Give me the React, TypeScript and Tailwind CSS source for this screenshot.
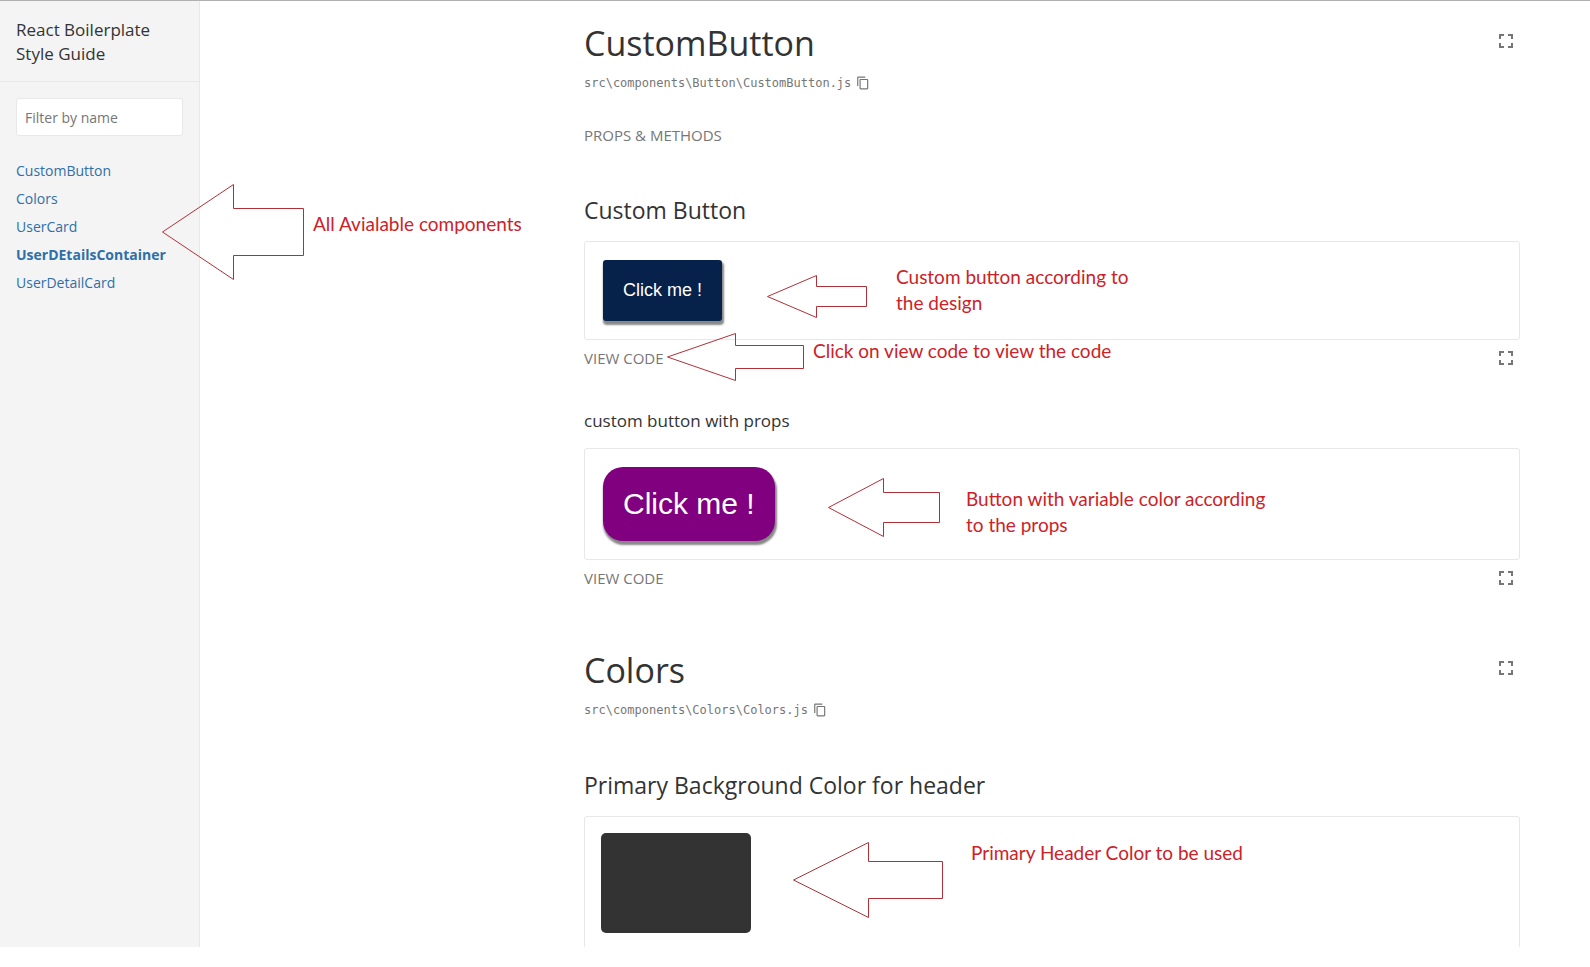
import { useState } from 'react';
import type { ReactNode } from 'react';
import { MdContentCopy, MdFullscreen } from 'react-icons/md';

const components = ['CustomButton', 'Colors', 'UserCard', 'UserDEtailsContainer', 'UserDetailCard'];
const activeComponent = 'UserDEtailsContainer';

function Sidebar() {
  const [filter, setFilter] = useState('');
  const visible = components.filter((name) => name.toLowerCase().includes(filter.toLowerCase()));

  return (
    <aside className="w-[200px] shrink-0 border-r border-[#e8e8e8] bg-[#f4f4f4]">
      <div className="border-b border-[#e8e8e8] pt-[17px] pr-4 pb-[15px] pl-4">
        <h1 className="text-[17px] leading-6 text-[#333]">React Boilerplate Style Guide</h1>
      </div>
      <div className="p-4">
        <input
          type="text"
          aria-label="Filter by name"
          placeholder="Filter by name"
          value={filter}
          onChange={(e) => setFilter(e.target.value)}
          className="h-[38px] w-full rounded-[3px] border border-[#e8e8e8] bg-white px-2 text-[14px] text-[#333] placeholder:text-[#767676]"
        />
      </div>
      <nav>
        <ul className="px-4 pt-[5px]">
          {visible.map((name) => (
            <li key={name} className="h-7 text-[14px] leading-7">
              <a href={'#' + name} className={name === activeComponent ? 'font-bold text-[#2f6fa7]' : 'text-[#2f6fa7]'}>
                {name}
              </a>
            </li>
          ))}
        </ul>
      </nav>
    </aside>
  );
}

function IsolateButton() {
  return (
    <button type="button" aria-label="Open isolated" className="text-[#767676]">
      <MdFullscreen size={24} />
    </button>
  );
}

function ComponentHeader({ name, path }: { name: string; path: string }) {
  return (
    <header>
      <div className="flex items-start justify-between pr-[2px]">
        <h2 className="text-[34px] leading-[44px] text-[#333]">{name}</h2>
        <div className="flex h-10 items-center">
          <IsolateButton />
        </div>
      </div>
      <div className="mt-2 flex h-5 items-center gap-[5px] font-['DejaVu_Sans_Mono',monospace] text-[12px] text-[#767676]">
        <span>{path}</span>
        <button type="button" aria-label="Copy to clipboard">
          <MdContentCopy size={14} />
        </button>
      </div>
    </header>
  );
}

function Preview({ children }: { children: ReactNode }) {
  return <div className="relative rounded-[3px] border border-[#e8e8e8] p-4">{children}</div>;
}

function PreviewToolbar({ children }: { children?: ReactNode }) {
  return (
    <div className="relative flex h-9 items-center justify-between pr-[2px]">
      <button type="button" className="text-[15px] text-[#767676]">VIEW CODE</button>
      {children}
      <IsolateButton />
    </div>
  );
}

interface ArrowProps {
  width: number;
  height: number;
  head: number;
  inset: number;
  className: string;
}

// Left pointing outline arrow: head is the head's length, inset the gap above and below the shaft
function Arrow({ width: w, height: h, head, inset, className }: ArrowProps) {
  const points = [
    [0, h / 2], [head, 0], [head, inset], [w, inset], [w, h - inset], [head, h - inset], [head, h],
  ].map((p) => p.join(',')).join(' ');

  return (
    <svg width={w + 1} height={h + 1} viewBox={`-0.5 -0.5 ${w + 1} ${h + 1}`} className={className} aria-hidden="true">
      <polygon points={points} fill="none" stroke="#b03038" strokeWidth="1" />
    </svg>
  );
}

function Note({ children, className }: { children: ReactNode; className: string }) {
  return (
    <p className={"absolute whitespace-nowrap font-['Lato',sans-serif] text-[19px] leading-[26px] text-[#cc2228] " + className}>
      {children}
    </p>
  );
}

export default function App() {
  return (
    <div className="h-screen bg-white pb-5 font-['Open_Sans',sans-serif]">
      <div className="relative flex h-full overflow-hidden border-t border-[#b0b0b0]">
        <Sidebar />
        <main className="min-w-0 flex-1 pl-96 pr-[70px] pt-5">
          <section>
            <ComponentHeader name="CustomButton" path="src\components\Button\CustomButton.js" />
            <button type="button" className="mt-8 block text-[15px] leading-5 text-[#767676]">PROPS &amp; METHODS</button>
            <h3 className="mt-[49px] text-[23px] leading-8 text-[#333]">Custom Button</h3>
            <div className="mt-[15px]">
              <Preview>
                <button
                  type="button"
                  className="m-[2px] block rounded-[3px] bg-[#06214a] p-5 font-['Liberation_Sans',sans-serif] text-[18px] leading-[21px] text-white shadow-[1px_3px_2px_1px_#888]"
                >
                  Click me !
                </button>
                <Arrow width={99} height={42} head={49} inset={11} className="absolute left-[182px] top-[33px]" />
                <Note className="left-[311px] top-[22px]">
                  Custom button according to
                  <br />
                  the design
                </Note>
              </Preview>
              <PreviewToolbar>
                <Arrow width={136} height={47} head={68} inset={12} className="absolute left-[83px] top-[-7px]" />
                <Note className="left-[229px] top-[-2px]">Click on view code to view the code</Note>
              </PreviewToolbar>
            </div>
            <p className="mt-[31px] text-[17px] leading-7 text-[#333]">custom button with props</p>
            <div className="mt-[13px]">
              <Preview>
                <button
                  type="button"
                  className="m-[2px] block rounded-[20px] bg-[#800080] p-5 font-['Liberation_Sans',sans-serif] text-[30px] leading-[34px] text-white shadow-[1px_3px_2px_1px_#888]"
                >
                  Click me !
                </button>
                <Arrow width={111} height={58} head={55} inset={14} className="absolute left-[243px] top-[29px]" />
                <Note className="left-[381px] top-[37px]">
                  Button with variable color according
                  <br />
                  to the props
                </Note>
              </Preview>
              <PreviewToolbar />
            </div>
          </section>

          <section className="mt-[52px]">
            <ComponentHeader name="Colors" path="src\components\Colors\Colors.js" />
            <h3 className="mt-[49px] text-[23px] leading-8 text-[#333]">Primary Background Color for header</h3>
            <div className="mt-[15px]">
              <Preview>
                <div className="h-[100px] w-[150px] rounded-[5px] bg-[#333]" />
                <Arrow width={149} height={75} head={75} inset={19} className="absolute left-[208px] top-[25px]" />
                <Note className="left-[386px] top-[23px]">Primary Header Color to be used</Note>
              </Preview>
            </div>
          </section>
        </main>

        <Arrow width={141} height={95} head={71} inset={24} className="absolute left-[162px] top-[183px]" />
        <Note className="left-[313px] top-[210px]">All Avialable components</Note>
      </div>
    </div>
  );
}
